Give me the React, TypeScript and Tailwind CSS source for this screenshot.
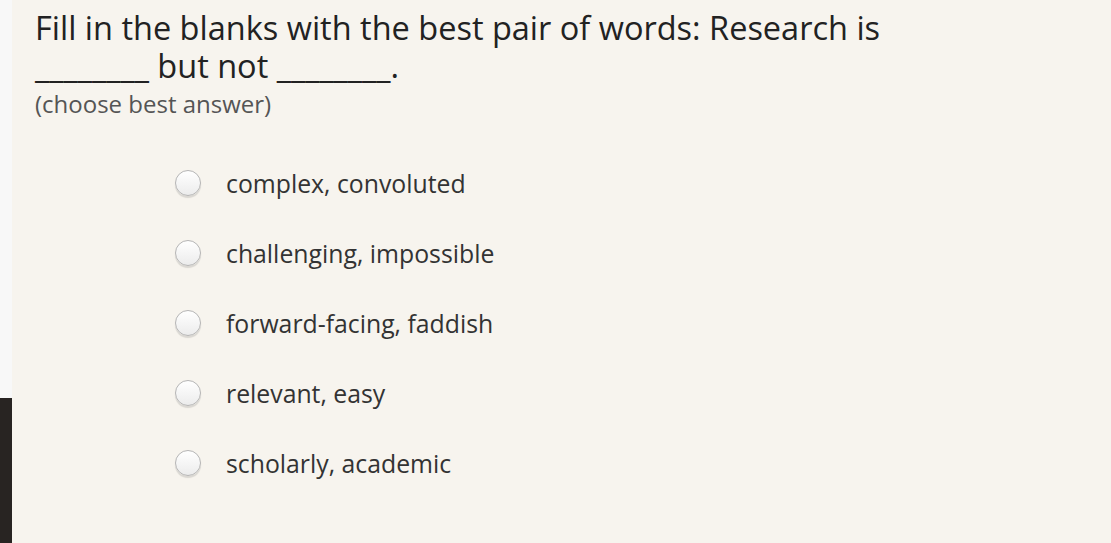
import React from "react";

const options = [
  "complex, convoluted",
  "challenging, impossible",
  "forward-facing, faddish",
  "relevant, easy",
  "scholarly, academic",
];

function Radio() {
  return (
    <span className="block w-[26px] h-[26px] shrink-0 rounded-full border border-[#b5b5b5] bg-gradient-to-b from-[#ffffff] to-[#ececec] shadow-[0_2px_1px_rgba(0,0,0,0.12)]" />
  );
}

export default function App() {
  return (
    <div
      className="flex w-[1111px] h-[543px] bg-[#f7f4ee] overflow-hidden"
      style={{ fontFamily: '"Open Sans", sans-serif' }}
    >
      <div className="flex flex-col w-[12px] shrink-0">
        <div className="h-[398px] bg-[#f8f8f8]" />
        <div className="flex-1 bg-[#282422]" />
      </div>
      <div className="flex-1 pl-[23px] pt-[9px]">
        <h1 className="text-[32.5px] leading-[38px] text-[#222222] font-normal">
          Fill in the blanks with the best pair of words: Research is
          <br />
          ________ but not ________.
        </h1>
        <p className="mt-[4px] text-[24px] leading-[30px] text-[#555555]">
          (choose best answer)
        </p>
        <div className="mt-[49px] flex flex-col gap-[40px] pl-[140px]">
          {options.map((o) => (
            <div key={o} className="flex items-center h-[30px]">
              <Radio />
              <span className="ml-[25px] text-[24.8px] text-[#333333] leading-[30px]">
                {o}
              </span>
            </div>
          ))}
        </div>
      </div>
    </div>
  );
}
